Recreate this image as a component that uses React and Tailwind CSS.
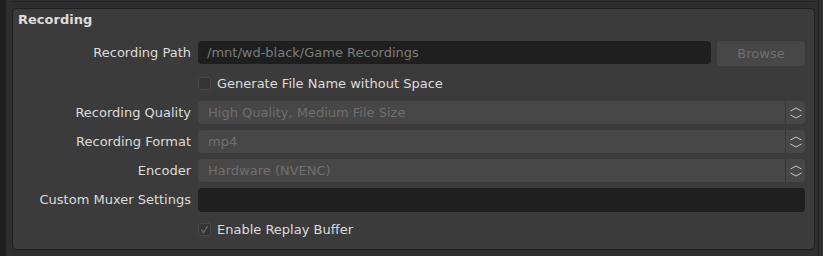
const font = { fontFamily: '"DejaVu Sans", "Liberation Sans", sans-serif' };

const Arrows = () => (
  <div className="flex h-full w-[20px] items-center justify-center border-l border-[#383838]">
    <svg width="14" height="18" viewBox="0 0 14 18" fill="none" stroke="#c8c8c8" strokeWidth="1">
      <path d="M1.5 7 L7 4 L12.5 7" />
      <path d="M1.5 11 L7 14 L12.5 11" />
    </svg>
  </div>
);

const Combo = ({ value }) => (
  <div className="flex h-[23px] items-center rounded-[4px] bg-[#474747]">
    <div className="flex-1 pl-[10px] text-[#6f6f6f]">{value}</div>
    <Arrows />
  </div>
);

const Check = ({ checked, label }) => (
  <div className="flex h-[23px] items-center">
    <div className="flex h-[13px] w-[13px] items-center justify-center rounded-[2px] border border-[#484848] bg-[#353535]">
      {checked && (
        <svg width="11" height="11" viewBox="0 0 11 11" fill="none" stroke="#6a6a6a" strokeWidth="1.3">
          <path d="M2.5 5.5 L4.5 8.5 L8.5 2" />
        </svg>
      )}
    </div>
    <span className="ml-[6px] text-[#dcdcdc]">{label}</span>
  </div>
);

const Row = ({ label, children, h = "h-[23px]" }) => (
  <div className={"flex items-center " + h}>
    <div className="w-[185px] pr-[7px] text-right text-[#dcdcdc]">{label}</div>
    <div className="flex-1">{children}</div>
  </div>
);

export default function App() {
  return (
    <div className="flex h-[256px] w-[823px] overflow-hidden bg-[#2e2e2e] text-[13px]" style={font}>
      <div className="w-[6px] bg-[#1f1f1f]" />
      <div className="flex w-[809px] flex-col pl-[6px]">
        <div className="h-[2px] border-b border-[#222222]" />
        <div className="mt-[6px] flex h-[242px] flex-col rounded-[5px] border border-[#1f1f1f] bg-[#3b3b3b] pr-[9px]">
          <div className="mt-[3px] pl-[5px] font-bold leading-[16px] text-[#dcdcdc]">Recording</div>
          <div className="mt-[13px] flex flex-col gap-[6px]">
            <div className="flex h-[25px] items-start">
              <div className="flex h-[23px] w-[185px] items-center justify-end pr-[7px] text-[#dcdcdc]">Recording Path</div>
              <div className="flex flex-1 gap-[6px]">
                <div className="flex h-[23px] flex-1 items-center rounded-[4px] bg-[#1f1f1f] pl-[9px] text-[#7c7c7c]">
                  /mnt/wd-black/Game Recordings
                </div>
                <div className="flex h-[25px] w-[88px] items-center justify-center rounded-[4px] bg-[#474747] text-[#6e6e6e]">
                  Browse
                </div>
              </div>
            </div>
            <Row label="">
              <Check label="Generate File Name without Space" />
            </Row>
            <Row label="Recording Quality">
              <Combo value="High Quality, Medium File Size" />
            </Row>
            <Row label="Recording Format">
              <Combo value="mp4" />
            </Row>
            <Row label="Encoder">
              <Combo value="Hardware (NVENC)" />
            </Row>
            <Row label="Custom Muxer Settings" h="h-[24px]">
              <div className="h-[24px] rounded-[4px] bg-[#1f1f1f]" />
            </Row>
            <Row label="">
              <Check checked label="Enable Replay Buffer" />
            </Row>
          </div>
        </div>
      </div>
      <div className="ml-[3px] w-[1px] bg-[#222222]" />
    </div>
  );
}
